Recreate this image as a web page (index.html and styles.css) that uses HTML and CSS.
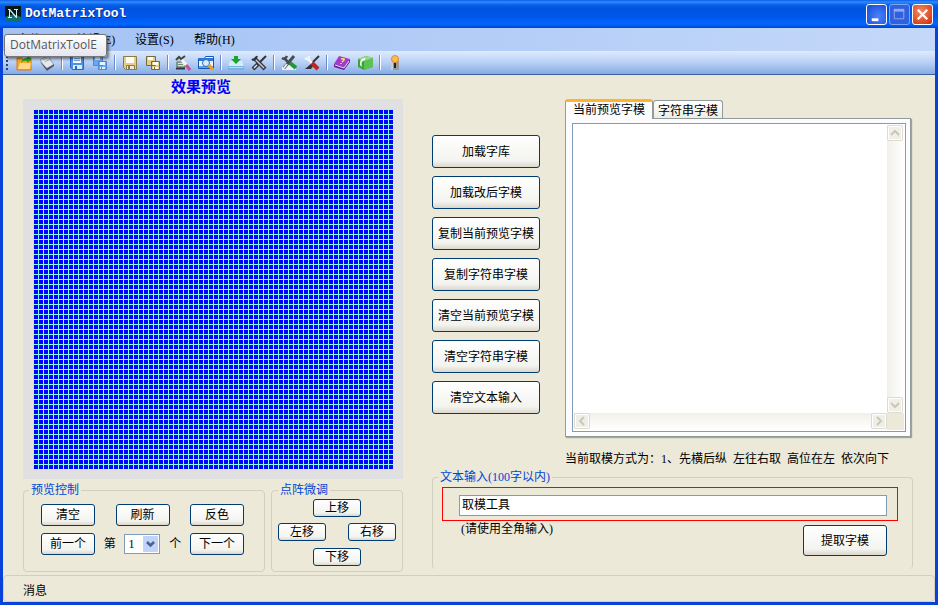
FILE: index.html
```
<!DOCTYPE html>
<html lang="zh-CN">
<head>
    <meta charset="UTF-8">
    <title>DotMatrixTool</title>
    <link rel="stylesheet" href="styles.css">
</head>
<body>
<div class="window">
    <header class="titlebar">
        <svg class="logo" viewBox="0 0 16 16">
            <rect width="16" height="16" fill="#04181c"/>
            <path d="M0 11q8-5 16 0v5H0z" fill="#176c70"/>
            <path d="M3 3h2l6 7V4H9V3h4v1h-1v8h-1L5 5v6h2v1H3v-1h1V4H3z" fill="#d8f0ee"/>
        </svg>
        <h1>DotMatrixTool</h1>
        <div class="win-btns">
            <button class="win-btn" aria-label="最小化"><svg viewBox="0 0 20 20"><path d="M5 15.500h7" stroke="#fff" stroke-width="3"/></svg></button>
            <button class="win-btn max" aria-label="最大化"><svg viewBox="0 0 20 20"><path d="M4.500 5.500h10v9h-10z" fill="none" stroke="#8fa9f2"/><path d="M4 5.500h11" stroke="#8fa9f2" stroke-width="3"/></svg></button>
            <button class="win-btn close" aria-label="关闭"><svg viewBox="0 0 20 20"><path d="M5 5l10 10M15 5L5 15" stroke="#fff" stroke-width="2.400"/></svg></button>
        </div>
    </header>

    <nav class="menu">
        <a href="#">文件(F)</a>
        <a href="#">编辑(E)</a>
        <a href="#">设置(S)</a>
        <a href="#">帮助(H)</a>
        <div class="tooltip">DotMatrixToolE</div>
    </nav>

    <div class="toolbar">
        <i class="grip"></i>
        <button aria-label="打开"><svg viewBox="0 0 16 16"><path d="M1 3h5l1 2h8v10H1z" fill="#f7a928" stroke="#d97a12"/><path d="M2 14l2-6h11l-1 6z" fill="#ffd887"/><path d="M5 8q1-5 6-5V0l5 4-5 4V6Q7 5 5 8z" fill="#32a824"/></svg></button>
        <button aria-label="新建"><svg viewBox="0 0 16 16"><path d="M1 5l8-4 6 9-7 5z" fill="#e4e9ef" stroke="#98a2ad"/><path d="M1 7l7 6 7-4v2l-7 5z" fill="#555c66"/><path d="M4 5l5-2M6 7l5-3" stroke="#aab4c0"/></svg></button>
        <i class="sep"></i>
        <button aria-label="保存"><svg viewBox="0 0 16 16"><path d="M1.500 1.500h13v13h-11l-2-2z" fill="#4b91e8" stroke="#2568c8"/><path d="M4 2h8v6H4z" fill="#f4faff"/><path d="M5 3.500h6M5 5.500h6" stroke="#78acec"/><path d="M4 10h9v4H4z" fill="#dcecff"/><path d="M6 11h2v3H6z" fill="#2568c8"/></svg></button>
        <button aria-label="全部保存"><svg viewBox="0 0 16 16"><path d="M1.500 1.500h9v9h-9zM6.500 6.500h8v8h-8z" fill="#6aaaf2" stroke="#4a8adf"/><path d="M3 2h5v3H3zM8 7h5v3H8zM8 12h5v2H8z" fill="#e8f4ff"/><path d="M9 12h1v2H9z" fill="#4a8adf"/></svg></button>
        <i class="sep"></i>
        <button aria-label="保存字库"><svg viewBox="0 0 16 16"><path d="M1.500 1.500h13v13h-11l-2-2z" fill="#e3cd88" stroke="#8c7b45"/><path d="M4 2h8v6H4z" fill="#fffdf4"/><path d="M4.500 10.500h8v4h-8z" fill="#f1ead0" stroke="#8c7b45"/><path d="M6 11h2v3H6z" fill="#8c7b45"/></svg></button>
        <button aria-label="保存全部字库"><svg viewBox="0 0 16 16"><path d="M1.500 1.500h9v9h-9zM6.500 6.500h8v8h-8z" fill="#e3cd88" stroke="#75683f"/><path d="M3 2h5v3H3zM8 7h5v3H8zM8 12h5v2H8z" fill="#fffdf4"/><path d="M9 12h1v2H9z" fill="#75683f"/></svg></button>
        <i class="sep"></i>
        <button aria-label="向导"><svg viewBox="0 0 16 16"><path d="M1 13.500h9" stroke="#2c3640" stroke-width="2"/><path d="M2 7h8v5H2z" fill="#cfe6c4" stroke="#4b5a50"/><path d="M3 9.500h5" stroke="#6b8f6a"/><path d="M1 5l3-3 2 2 4-3" stroke="#3c4a34" stroke-width="2" fill="none"/><path d="M7 5l5 6" stroke="#f4f4f4" stroke-width="3"/><path d="M11 10l4 5" stroke="#c74d9e" stroke-width="3"/></svg></button>
        <button aria-label="预览"><svg viewBox="0 0 16 16"><path d="M.5 3.500h6l1-2h8v12H.5z" fill="#e9f4ff" stroke="#1b57b8"/><path d="M1 3h14v3H1z" fill="#2b75dc"/><path d="M1 11h14v2H1z" fill="#5f9de8"/><circle cx="8" cy="8" r="3.500" fill="#d5ecff" stroke="#356caa"/><path d="M11 10l4 5" stroke="#f0a01e" stroke-width="3"/></svg></button>
        <i class="sep"></i>
        <button aria-label="导入"><svg viewBox="0 0 16 16"><path d="M2 6h12l2 6H0z" fill="#d6ebf9"/><path d="M0 11h16v4H0z" fill="#79b3df"/><path d="M1 12.500h14" stroke="#b9dcf3"/><path d="M6 1h4v3h3L8 9 3 4h3z" fill="#18a52a"/></svg></button>
        <button aria-label="工具"><svg viewBox="0 0 16 16"><path d="M3 3l11 11" stroke="#363b40" stroke-width="4"/><path d="M4 4l9 9" stroke="#c3c9ce" stroke-width="1.500"/><path d="M1 4q3 3 5-3M15 1L9 7" stroke="#30363b" stroke-width="2" fill="none"/><path d="M7 9l-5 5" stroke="#30363b" stroke-width="4"/><path d="M6 10l-3 3" stroke="#e4e8eb" stroke-width="1.500"/></svg></button>
        <i class="sep"></i>
        <button aria-label="选项"><svg viewBox="0 0 16 16"><path d="M1 12q7-4 14 0v3H1z" fill="#eef1f4"/><path d="M1 3q3 2 5-2M4 4l5 5" stroke="#3f4a49" stroke-width="2.500" fill="none"/><path d="M13 1L3 13" stroke="#47504f" stroke-width="3"/><path d="M6 9l-3 4" stroke="#e7ecef" stroke-width="2"/><path d="M9 8l6 5" stroke="#23963a" stroke-width="4"/></svg></button>
        <button aria-label="修复"><svg viewBox="0 0 16 16"><path d="M15 1L8 8" stroke="#30343b" stroke-width="2"/><path d="M8 8l-7 6h6l3-4z" fill="#30343b"/><path d="M1 3q4 3 4-2M4 4l4 4" stroke="#f2f4f8" stroke-width="2.500" fill="none"/><path d="M8 8l6 6" stroke="#c5241d" stroke-width="4"/></svg></button>
        <i class="sep"></i>
        <button aria-label="帮助"><svg viewBox="0 0 16 16"><path d="M5 1l11 3-6 8L0 9z" fill="#a13bd0"/><path d="M0 9l10 3 6-8v3l-6 8-10-3z" fill="#6a1b97"/><path d="M1 10l9 3 5-7" stroke="#f0d8fa" fill="none"/><path d="M7 4q4-1 3 1L8 7M7 8v1" stroke="#ffdf4a" stroke-width="1.500" fill="none"/></svg></button>
        <button aria-label="字库"><svg viewBox="0 0 16 16"><path d="M1 4l8-3 7 2v9l-9 3-6-3z" fill="#3aa33c"/><path d="M7 6l9-3v9l-9 3z" fill="#5cc256"/><path d="M1 4l8-3 7 2-9 3z" fill="#99da86"/><path d="M8 3Q2 4 3 10l2 2q-2-6 3-7z" fill="#fff"/></svg></button>
        <i class="sep"></i>
        <button aria-label="锁定"><svg viewBox="0 0 16 16"><path d="M4 6h8v9H4z" fill="#999"/><path d="M4 6h2v9H4z" fill="#ccc"/><path d="M7 8h2v5H7z" fill="#222"/><circle cx="8" cy="4" r="3.500" fill="#ffbb48" stroke="#d98a35"/></svg></button>
    </div>

    <main>
        <section class="left">
            <h2>效果预览</h2>
            <div class="preview"><div class="dots"></div></div>
            <div class="groups">
                <fieldset class="control">
                    <legend>预览控制</legend>
                    <div class="row">
                        <button class="btn">清空</button>
                        <button class="btn">刷新</button>
                        <button class="btn">反色</button>
                    </div>
                    <div class="row">
                        <button class="btn">前一个</button>
                        <label for="num">第</label>
                        <select id="num"><option>1</option><option>2</option><option>3</option></select>
                        <span>个</span>
                        <button class="btn">下一个</button>
                    </div>
                </fieldset>
                <fieldset class="move">
                    <legend>点阵微调</legend>
                    <button class="btn up">上移</button>
                    <button class="btn">左移</button>
                    <button class="btn">右移</button>
                    <button class="btn down">下移</button>
                </fieldset>
            </div>
        </section>

        <section class="right">
            <div class="work">
                <div class="actions">
                    <button class="btn">加载字库</button>
                    <button class="btn">加载改后字模</button>
                    <button class="btn">复制当前预览字模</button>
                    <button class="btn">复制字符串字模</button>
                    <button class="btn">清空当前预览字模</button>
                    <button class="btn">清空字符串字模</button>
                    <button class="btn">清空文本输入</button>
                </div>
                <div class="output">
                    <div class="tabs">
                        <button class="tab selected">当前预览字模</button>
                        <button class="tab">字符串字模</button>
                    </div>
                    <div class="tab-page">
                        <div class="memo">
                            <textarea aria-label="当前预览字模"></textarea>
                            <div class="bar vertical">
                                <button disabled aria-label="向上"><svg viewBox="0 0 14 14"><path d="M3 9l4-4 4 4"/></svg></button>
                                <button disabled aria-label="向下"><svg viewBox="0 0 14 14"><path d="M3 5l4 4 4-4"/></svg></button>
                            </div>
                            <div class="bar horizontal">
                                <button disabled aria-label="向左"><svg viewBox="0 0 14 14"><path d="M9 3L5 7l4 4"/></svg></button>
                                <button disabled aria-label="向右"><svg viewBox="0 0 14 14"><path d="M5 3l4 4-4 4"/></svg></button>
                            </div>
                        </div>
                    </div>
                    <p class="mode"><span>当前取模方式为：1、先横后纵</span><span>左往右取</span><span>高位在左</span><span>依次向下</span></p>
                </div>
            </div>
            <fieldset class="text-input">
                <legend>文本输入(100字以内)</legend>
                <div class="red"><input type="text" id="text" value="取模工具"></div>
                <div class="submit">
                    <label for="text">(请使用全角输入)</label>
                    <button class="btn">提取字模</button>
                </div>
            </fieldset>
        </section>
    </main>

    <footer class="status">消息</footer>
</div>
</body>
</html>
```
FILE: styles.css
```
*{
    margin: 0;
    padding: 0;
    box-sizing: border-box;
}
body, button, input, select, textarea{
    font-family: "Liberation Serif", "Noto Sans CJK SC", serif;
    font-size: 12px;
    line-height: 16px;
    color: #000;
}
.window{
    min-height: 100vh;
    display: flex;
    flex-direction: column;
    background: #ece9d8;
    border: solid #0842d8;
    border-width: 0 3px 3px;
}
/* 标题栏 */
.titlebar{
    height: 28px;
    margin: 0 -3px;
    padding: 0 5px;
    display: flex;
    align-items: center;
    gap: 4px;
    background: linear-gradient(#0a5ee8, #2f8bff 2px, #0560ea 5px, #0053e1 9px, #0058ee 18px, #0068ff 24px, #0143cf);
}
.logo{
    width: 16px;
    height: 16px;
}
.titlebar h1{
    flex: 1;
    font-family: "Liberation Mono", monospace;
    font-size: 13px;
    color: #fff;
    text-shadow: 1px 1px #0a2f8c;
}
.win-btns{
    display: flex;
    gap: 2px;
}
.win-btn{
    width: 21px;
    height: 21px;
    border: 1px solid #fff;
    border-radius: 3px;
    background: radial-gradient(circle at 60% 60%, #4a83fa, #2a5fe6 60%, #1747c4);
}
.win-btn svg{
    display: block;
}
.max{
    border-color: #7ea3f5;
    background: #2f60dd;
}
.close{
    background: radial-gradient(circle at 40% 35%, #f08a68, #e0512a 60%, #bd3210);
}
/* 菜单 */
.menu{
    height: 23px;
    padding-left: 14px;
    display: flex;
    align-items: center;
    gap: 18px;
    position: relative;
    background: linear-gradient(90deg, #a3c2f5, #c4d8f9);
}
.menu a{
    color: #000;
    text-decoration: none;
    min-width: 41px;
}
.tooltip{
    position: absolute;
    left: 1px;
    top: 6px;
    z-index: 1;
    padding: 2px 9px 3px 5px;
    border: 1px solid #767676;
    border-radius: 3px;
    background: linear-gradient(#fff, #e4e5f0);
    box-shadow: 2px 2px 3px rgba(0,0,0,0.5);
    font-family: "Open Sans", sans-serif;
    color: #575757;
}
/* 工具栏 */
.toolbar{
    height: 24px;
    padding-left: 3px;
    display: flex;
    align-items: center;
    background: linear-gradient(#dfebfe, #b8d0f5 50%, #86abe3);
    border-bottom: 1px solid #3b619c;
}
.toolbar button{
    width: 23px;
    height: 20px;
    padding: 2px 3px;
    border: none;
    background: none;
}
.toolbar svg{
    display: block;
    width: 16px;
    height: 16px;
}
.grip{
    width: 2px;
    height: 14px;
    margin-right: 5px;
    background: repeating-linear-gradient(#27417f 0 2px, transparent 2px 4px);
}
.sep{
    width: 2px;
    height: 15px;
    margin: 0 3px 0 2px;
    background: #6a8ccb;
    border-right: 1px solid #fff;
}
main{
    flex: 1;
    display: flex;
    gap: 29px;
    padding: 0 22px 3px 20px;
}
/* 左边预览 */
.left{
    width: 380px;
    flex-shrink: 0;
    display: flex;
    flex-direction: column;
}
.left h2{
    height: 24px;
    padding-right: 24px;
    line-height: 24px;
    font-size: 15px;
    text-align: center;
    color: #00f;
}
.preview{
    padding: 10px;
    background: #e0e0e0;
}
.dots{
    aspect-ratio: 1;
    background: linear-gradient(#80ffff 1px, transparent 1px), linear-gradient(90deg, #80ffff 1px, #00f 1px);
    background-size: 5px 5px;
}
.groups{
    flex: 1;
    display: flex;
    gap: 6px;
    margin-top: 3px;
}
fieldset{
    border: 1px solid #d0d0bf;
    border-radius: 4px;
    min-width: 0;
}
legend{
    height: 16px;
    padding: 0 2px;
    color: #0046d5;
}
.btn{
    border: 1px solid #003c74;
    border-radius: 3px;
    background: linear-gradient(#fff, #f3f3ef 80%, #dcd7cb);
    white-space: nowrap;
}
.control{
    flex: 1;
    padding: 6px 20px 16px 17px;
}
.control legend{
    margin-left: -12px;
}
.row{
    display: flex;
    align-items: center;
    justify-content: space-between;
}
.row + .row{
    margin-top: 7px;
}
.row .btn{
    width: 54px;
    height: 22px;
    line-height: 18px;
}
.row select{
    width: 36px;
    height: 20px;
    padding-left: 3px;
    border: 1px solid #7f9db9;
    appearance: none;
    background: #fff url("data:image/svg+xml,%3Csvg xmlns='http://www.w3.org/2000/svg' width='15' height='16'%3E%3Crect width='15' height='16' rx='1' fill='%23c1d3fb'/%3E%3Cpath d='M4 6l3.500 3.500L11 6' fill='none' stroke='%234d6185' stroke-width='2.500'/%3E%3C/svg%3E") no-repeat right 1px center;
}
.move{
    width: 132px;
    padding: 1px 6px 5px;
    display: grid;
    grid-template-columns: 48px 48px;
    justify-content: space-between;
    gap: 6px 0;
}
.move .btn{
    height: 18px;
    line-height: 14px;
}
.up, .down{
    grid-column: 1 / 3;
    justify-self: center;
    width: 48px;
}
/* 右边字模 */
.right{
    flex: 1;
    min-width: 0;
    display: flex;
    flex-direction: column;
    padding: 24px 0 3px;
}
.work{
    flex: 1;
    display: flex;
    gap: 25px;
    padding-right: 2px;
}
.actions{
    width: 108px;
    padding-top: 36px;
    display: flex;
    flex-direction: column;
    gap: 8px;
}
.actions .btn{
    height: 33px;
}
.output{
    flex: 1;
    min-width: 0;
    display: flex;
    flex-direction: column;
}
.tabs{
    display: flex;
    align-items: flex-end;
}
.tab{
    height: 18px;
    padding: 2px 4px 0;
    border: 1px solid #919b9c;
    border-bottom: none;
    border-radius: 3px 3px 0 0;
    background: linear-gradient(#fff, #eeede4);
    line-height: 14px;
}
.tabs .selected{
    height: 20px;
    padding: 0 7px 2px;
    margin-bottom: -1px;
    border-top: 3px solid #ffb52b;
    background: #fcfcfe;
    z-index: 1;
}
.tab-page{
    flex: 1;
    display: flex;
    padding: 4px 4px 4px 6px;
    border: 1px solid #919b9c;
    background: #fcfcfe;
    box-shadow: 1px 1px 1px rgba(0,0,0,0.3);
}
.memo{
    flex: 1;
    display: grid;
    grid-template: 1fr 17px / 1fr 17px;
    padding: 1px;
    border: 1px solid #7f9db9;
    background: linear-gradient(#ece9d8, #ece9d8) right 1px bottom 1px / 17px 17px no-repeat #fff;
}
.memo textarea{
    border: none;
    resize: none;
    outline: none;
}
.bar{
    display: flex;
    justify-content: space-between;
    background: linear-gradient(90deg, #f1f0e8, #fff);
}
.vertical{
    flex-direction: column;
}
.horizontal{
    background: linear-gradient(#f1f0e8, #fff);
}
.bar button{
    width: 16px;
    height: 16px;
    border: 1px solid #dddbd0;
    border-radius: 2px;
    background: #f0efe7;
    box-shadow: inset 0 0 0 1px #fff;
}
.bar svg{
    display: block;
    fill: none;
    stroke: #c9c7ba;
    stroke-width: 2;
}
.mode{
    display: flex;
    gap: 6px;
    margin: 14px 0 2px;
    white-space: nowrap;
}
.text-input{
    padding: 2px 14px 13px 9px;
    border-bottom: none;
}
.text-input legend{
    margin-left: -4px;
}
.red{
    padding: 7px 10px 4px 16px;
    border: 1px solid #f00;
}
.red input{
    display: block;
    width: 100%;
    height: 21px;
    padding: 0 2px 3px;
    border: 1px solid #7f9db9;
    background: #fff;
}
.submit{
    display: flex;
    justify-content: space-between;
    padding: 0 11px 0 19px;
}
.submit .btn{
    width: 84px;
    height: 31px;
    margin-top: 4px;
}
/* 状态栏 */
.status{
    height: 27px;
    padding: 7px 19px;
    border: 1px solid #d0d0bf;
    border-radius: 4px;
}
```
